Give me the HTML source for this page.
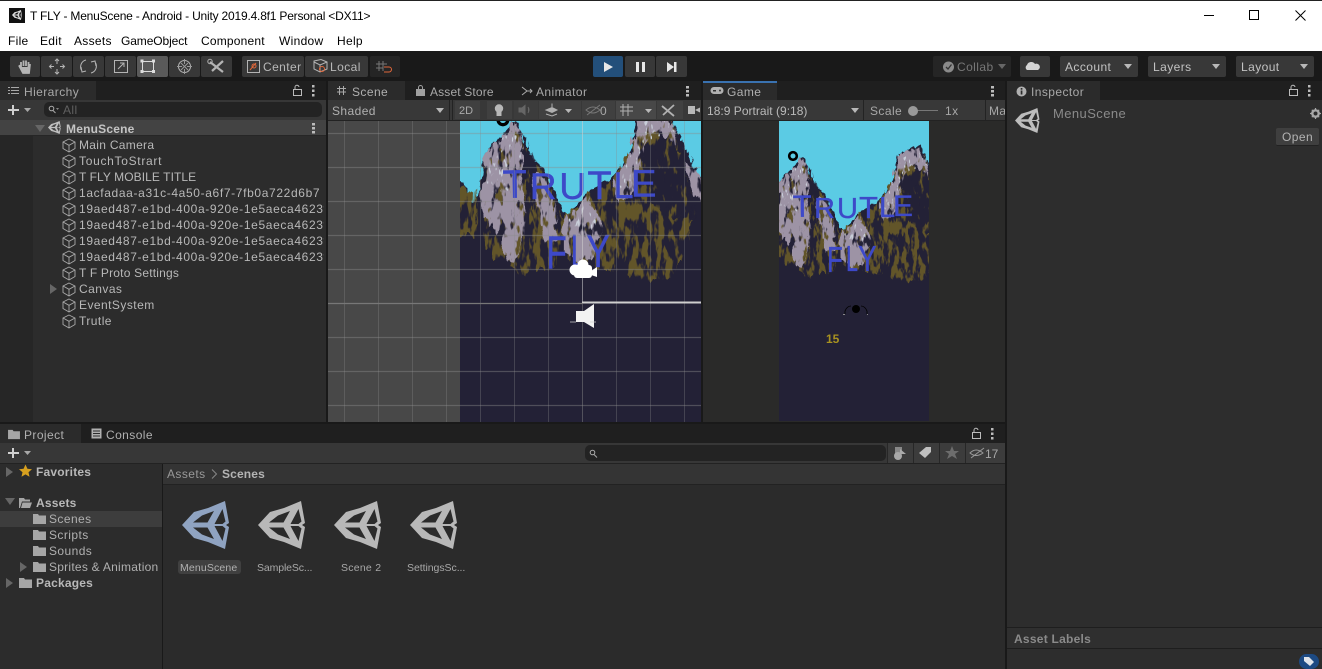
<!DOCTYPE html>
<html><head><meta charset="utf-8"><title>Unity</title>
<style>
html,body{margin:0;padding:0;width:1322px;height:669px;overflow:hidden;background:#191919}
body{position:relative;font:12px "Liberation Sans",sans-serif;color:#b4b4b4}
.a{position:absolute}
.t{position:absolute;white-space:nowrap;line-height:16px;letter-spacing:.42px}
.m{position:absolute;color:#000;top:33px;line-height:16px;font-size:12px;letter-spacing:.3px;white-space:nowrap}
.b{position:absolute;background:#383838;border-radius:2px;top:56px;height:21px}
.h{position:absolute;left:79px;white-space:nowrap;line-height:16px;letter-spacing:.45px;color:#b8b8b8;width:245px;overflow:hidden}
.g{letter-spacing:.64px}
.c{position:absolute;left:62px;width:14px;height:16px}
.k{position:absolute;width:0;height:0;border-left:4px solid transparent;border-right:4px solid transparent;border-top:5px solid #b8b8b8}
.r{position:absolute;width:0;height:0;border-top:5px solid transparent;border-bottom:5px solid transparent;border-left:7px solid #666}
.d{position:absolute;width:0;height:0;border-left:5px solid transparent;border-right:5px solid transparent;border-top:7px solid #666}
svg{position:absolute;overflow:hidden}
</style></head><body>
<svg width="0" height="0" style="left:0;top:0"><defs>
<symbol id="cube" viewBox="0 0 14 16"><path d="M7 2 L13 5 V11.500 L7 15 L1 11.500 V5 Z M1 5 L7 8.300 L13 5 M7 8.300 V15" fill="none" stroke="#a8a8a8" stroke-width=".9"/></symbol>
<symbol id="unity" viewBox="0 0 48 48"><path fill-rule="evenodd" d="M0 24 L12 11 L26 7 L43 0 L47 22 L44 24 L47 26 L43 48 L26 41 L12 37 Z M11 21.500 L25.500 21.500 L32 10 L20 14.500 Z M32.500 23 L40.500 23 L43.500 20.500 L40.500 8 Z M32.500 25 L40.500 25 L43.500 27.500 L40.500 40 Z M11 26.500 L25.500 26.500 L32 38 L20 33.500 Z"/></symbol>
<symbol id="folder" viewBox="0 0 13 12"><path d="M0 1 H5 L6 2.500 H13 V11 H0 Z" fill="#a6a6a6"/></symbol>
<filter id="rough" x="-30" y="-50" width="220" height="360" filterUnits="userSpaceOnUse" color-interpolation-filters="sRGB">
<feTurbulence type="fractalNoise" baseFrequency="0.3 0.16" numOctaves="2" seed="5" result="n"/>
<feDisplacementMap in="SourceGraphic" in2="n" scale="6" xChannelSelector="R" yChannelSelector="G"/>
</filter>
<filter id="mOlive" x="-30" y="-50" width="220" height="360" filterUnits="userSpaceOnUse" color-interpolation-filters="sRGB">
<feTurbulence type="fractalNoise" baseFrequency="0.2 0.07" numOctaves="3" seed="3" result="n"/>
<feDisplacementMap in="SourceGraphic" in2="n" scale="12" xChannelSelector="R" yChannelSelector="G" result="d"/>
<feColorMatrix in="n" type="matrix" values="0 0 0 0 0 0 0 0 0 0 0 0 0 0 0 9 0 0 0 -4.100" result="m"/>
<feComposite in="d" in2="m" operator="in"/>
</filter>
<filter id="mGrey" x="-30" y="-50" width="220" height="360" filterUnits="userSpaceOnUse" color-interpolation-filters="sRGB">
<feTurbulence type="fractalNoise" baseFrequency="0.2 0.07" numOctaves="3" seed="11" result="n"/>
<feDisplacementMap in="SourceGraphic" in2="n" scale="10" xChannelSelector="R" yChannelSelector="G" result="d"/>
<feColorMatrix in="n" type="matrix" values="0 0 0 0 0 0 0 0 0 0 0 0 0 0 0 9 0 0 0 -3 " result="m"/>
<feComposite in="d" in2="m" operator="in"/>
</filter>
<filter id="mLight" x="-30" y="-50" width="220" height="360" filterUnits="userSpaceOnUse" color-interpolation-filters="sRGB">
<feTurbulence type="fractalNoise" baseFrequency="0.4 0.15" numOctaves="2" seed="21" result="n"/>
<feColorMatrix in="n" type="matrix" values="0 0 0 0 0 0 0 0 0 0 0 0 0 0 0 10 0 0 0 -6.300" result="m"/>
<feComposite in="SourceGraphic" in2="m" operator="in"/>
</filter>
<g id="art">
<rect x="-30" y="-50" width="220" height="360" fill="#5bcbe4"/>
<polygon filter="url(#rough)" fill="#232136" points="-40,84 -15,84 -12,100 -6,97 -4,87 0,62 6,54 13,48 18,42 21,37 25,36 28,44 29,51 38,66 46,72 56,96 63,111 71,102 81,91 101,79 108,68 114,59 119,33 127,30 134,27 141,24 150,44 160,64 168,80 195,78 195,330 -40,330"/>
<g fill="#625529" filter="url(#mOlive)">
<polygon points="-20,86 -6,90 -4,125 -20,126"/>
<polygon points="0,70 26,44 38,68 46,74 56,98 63,113 60,130 56,150 44,152 30,156 16,150 2,136 -4,118"/>
<polygon points="60,112 72,104 82,94 100,82 116,138 108,152 88,152 70,150 62,140"/>
<polygon points="100,82 114,62 122,40 146,34 152,60 160,82 164,110 158,136 146,158 130,162 112,156 106,130"/>
</g>
<g fill="#232136" filter="url(#mGrey)">
<polygon points="124,56 142,46 162,80 164,112 146,112 130,100 126,78"/>
<polygon points="2,96 20,92 24,114 8,116"/>
<polygon points="30,48 40,70 44,92 36,104 30,80"/>
</g>
<g fill="#9d93a5" filter="url(#mGrey)">
<polygon points="-2,96 0,64 6,56 13,50 18,44 21,39 25,38 28,48 31,66 28,84 32,96 30,120 26,142 18,146 12,126 8,116 2,118"/>
<polygon points="38,78 46,80 54,100 58,128 50,134 44,116 40,100"/>
<polygon points="62,116 70,106 80,96 92,112 88,132 84,146 70,146 62,136"/>
<polygon points="100,84 108,72 114,62 120,36 130,32 132,44 124,56 120,76 114,94 104,100"/>
<polygon points="127,31 141,26 150,46 148,56 138,44 130,48"/>
<polygon points="156,68 168,80 172,100 162,92"/>
</g>
<g fill="#c8ced9" filter="url(#mLight)">
<polygon points="0,66 6,56 13,50 21,40 26,42 28,64 18,90 2,100"/>
<polygon points="104,84 116,58 122,38 140,28 148,44 130,50 120,76 110,98"/>
<polygon points="64,114 80,98 88,116 74,130"/>
</g>
<g fill="#3d49c8" stroke="#3d49c8" stroke-width=".3" font-family="Liberation Sans,sans-serif">
<text x="14" y="96" font-size="31" transform="rotate(-1 14 96)">T</text>
<text x="35" y="97" font-size="29">R</text>
<text x="58" y="97" font-size="29">U</text>
<text x="80" y="97" font-size="31">T</text>
<text x="100" y="96" font-size="29">L</text>
<text x="114" y="95" font-size="30">E</text>
<text transform="translate(48 151) scale(.72 1)" font-size="36">F</text>
<text transform="translate(67 150) scale(.6 1)" font-size="36">L</text>
<text transform="translate(79 150) scale(.78 1)" font-size="36">Y</text>
</g>
<circle cx="14" cy="35" r="3.800" fill="none" stroke="#000" stroke-width="2.600"/>
</g>
</defs></svg>

<!-- title bar -->
<div class="a" style="left:0;top:0;width:1322px;height:51px;background:#fff;border-top:1px solid #222;box-sizing:border-box"></div>
<div class="a" style="left:9px;top:8px;width:16px;height:15px;background:#111"></div>
<svg style="left:12px;top:10px;fill:#ddd" width="10" height="10"><use href="#unity" width="10" height="10"/></svg>
<div class="t" style="left:30px;top:8px;color:#000;letter-spacing:-.2px">T FLY - MenuScene - Android - Unity 2019.4.8f1 Personal &lt;DX11&gt;</div>
<div class="a" style="left:1204px;top:15px;width:10px;height:1px;background:#000"></div>
<div class="a" style="left:1249px;top:10px;width:8px;height:8px;border:1px solid #000"></div>
<svg style="left:1295px;top:10px" width="11" height="11"><path d="M.5 .5 L10.500 10.500 M10.500 .5 L.5 10.500" stroke="#000" stroke-width="1"/></svg>
<div class="m" style="left:8px">File</div><div class="m" style="left:40px">Edit</div><div class="m" style="left:74px">Assets</div><div class="m" style="left:121px;letter-spacing:-.1px">GameObject</div><div class="m" style="left:201px;letter-spacing:.2px">Component</div><div class="m" style="left:279px">Window</div><div class="m" style="left:337px">Help</div>

<!-- toolbar -->
<div class="b" style="left:10px;width:30px"></div><div class="b" style="left:41px;width:31px"></div><div class="b" style="left:73px;width:31px"></div><div class="b" style="left:105px;width:31px"></div><div class="b" style="left:137px;width:31px;background:#5a5a5a"></div><div class="b" style="left:169px;width:31px"></div><div class="b" style="left:201px;width:31px"></div>
<svg style="left:10px;top:56px" width="222" height="21" fill="none" stroke="#b4b4b4" stroke-width="1">
<path d="M11 11 V6 M13.500 10 V4.500 M16 10 V4.500 M18.500 11 V6 M11 11 L9 9.500 L13 17 H19 L20 8" stroke-width="1.800"/><path d="M10 11 H20 V14 L18 17 H13Z" fill="#b4b4b4" stroke="none"/>
<path d="M47 3 V8 M47 13 V18 M39.500 10.500 H44 M50 10.500 H54.500 M45 5 L47 3 L49 5 M45 16 L47 18 L49 16 M41.500 8.500 L39.500 10.500 L41.500 12.500 M52.500 8.500 L54.500 10.500 L52.500 12.500"/>
<path d="M76 4 A7 7 0 0 0 72 15 M71 11 L72 16 L76 15 M81 17 A7 7 0 0 0 85 6 M86 10 L85 5 L81 6"/>
<rect x="104.500" y="4.500" width="13" height="12"/><path d="M108 13 L114 7 M110 7 H114 V11"/>
<rect x="132.500" y="5.500" width="11" height="10" stroke="#ddd"/><g fill="#ddd" stroke="none"><rect x="130.500" y="3.500" width="3" height="3"/><rect x="142" y="3.500" width="3" height="3"/><rect x="130.500" y="14" width="3" height="3"/><rect x="142" y="14" width="3" height="3"/></g>
<circle cx="174.500" cy="10.500" r="6"/><path d="M167 10.500 H172 M177 10.500 H182 M174.500 3 V8 M174.500 13 V18 M171 7 L178 14 M178 7 L171 14" stroke="#999"/>
<path d="M200 6 L213 16 M213 5 L202 15" stroke-width="2.200"/><circle cx="200" cy="5.500" r="2.200"/></svg>
<div class="b" style="left:242px;width:62px"></div><div class="b" style="left:305px;width:63px"></div><div class="b" style="left:370px;width:30px;background:#252525"></div>
<svg style="left:247px;top:59px" width="150" height="16" fill="none" stroke="#b4b4b4">
<rect x=".5" y="1.500" width="12" height="12"/><path d="M3 11 L9 4" stroke="#e0673a"/><circle cx="7" cy="7" r="2" stroke="#e0673a"/>
<path d="M67 2 L74 0.500 L80 3 V10 L73 13 L67 10Z M67 3 L73 6 L80 3 M73 6 V13"/><circle cx="75" cy="10" r="2.500" stroke="#e0673a"/>
<path d="M132 2 V12 M136 2 V12 M129 5 H140 M129 9 H136" stroke="#777"/><path d="M137 8 H142 A2.500 2.500 0 0 1 142 13 H137" stroke="#e0673a"/></svg>
<div class="t" style="left:263px;top:59px;color:#b8b8b8">Center</div><div class="t" style="left:330px;top:59px;color:#b8b8b8">Local</div>
<div class="b" style="left:593px;width:30px;background:#234f7a"></div><div class="b" style="left:625px;width:30px"></div><div class="b" style="left:656px;width:31px"></div>
<svg style="left:593px;top:56px" width="94" height="21" fill="#e8e8e8"><path d="M11 6 L20 11 L11 16Z"/><rect x="43" y="6" width="3" height="10"/><rect x="49" y="6" width="3" height="10"/><path d="M74 6 L81 11 L74 16Z"/><rect x="81" y="6" width="2.500" height="10"/></svg>
<div class="b" style="left:933px;width:78px;background:#252525"></div><div class="b" style="left:1020px;width:30px"></div>
<div class="b" style="left:1060px;width:78px"></div><div class="b" style="left:1148px;width:78px"></div><div class="b" style="left:1236px;width:78px"></div>
<svg style="left:942px;top:59px" width="100" height="16"><circle cx="6.500" cy="8" r="5.500" fill="#8a8a8a"/><path d="M4 8 L6 10 L9.500 5.500" stroke="#333" stroke-width="1.300" fill="none"/><path d="M85 11 a3 3 0 0 1 0 -5 a4.500 4.500 0 0 1 8 -1 a3 3 0 0 1 3 6Z" fill="#d4d4d4"/></svg>
<div class="t" style="left:957px;top:59px;color:#777">Collab</div><div class="k" style="left:998px;top:64px;border-top-color:#666"></div>
<div class="t" style="left:1065px;top:59px;color:#c2c2c2">Account</div><div class="k" style="left:1124px;top:64px"></div>
<div class="t" style="left:1153px;top:59px;color:#c2c2c2">Layers</div><div class="k" style="left:1212px;top:64px"></div>
<div class="t" style="left:1241px;top:59px;color:#c2c2c2">Layout</div><div class="k" style="left:1300px;top:64px"></div>

<!-- Hierarchy -->
<div class="a" style="left:0;top:81px;width:326px;height:19px;background:#1f1f1f"></div>
<div class="a" style="left:0;top:81px;width:96px;height:19px;background:#2b2b2b"></div>
<div class="a" style="left:0;top:100px;width:326px;height:20px;background:#373737"></div>
<div class="a" style="left:0;top:120px;width:326px;height:303px;background:#2c2c2c"></div>
<div class="a" style="left:0;top:136px;width:33px;height:287px;background:#262626"></div>
<div class="a" style="left:0;top:120px;width:326px;height:16px;background:#434343;border-bottom:1px solid #262626;box-sizing:border-box"></div>
<svg style="left:8px;top:86px" width="12" height="10" stroke="#a8a8a8" fill="none"><path d="M3 1.500 H11 M3 4.500 H11 M3 7.500 H11 M0 1.500 H2 M0 4.500 H2 M0 7.500 H2"/></svg>
<div class="t" style="left:24px;top:84px;color:#a8a8a8">Hierarchy</div>
<svg style="left:292px;top:84px" width="28" height="14" fill="none" stroke="#bbb"><rect x="1.500" y="5.500" width="8" height="6"/><path d="M3 5 V3.500 A2 2 0 0 1 7 3 "/><g fill="#bbb" stroke="none"><rect x="20" y="1" width="2.500" height="2.500"/><rect x="20" y="5.500" width="2.500" height="2.500"/><rect x="20" y="10" width="2.500" height="2.500"/></g></svg>
<svg style="left:7px;top:103px" width="26" height="14"><path d="M6 2 V12 M1 7 H12" stroke="#d0d0d0" stroke-width="2"/><path d="M17 5 H24 L20.500 9Z" fill="#a8a8a8"/></svg>
<div class="a" style="left:44px;top:102px;width:278px;height:15px;background:#232323;border-radius:5px"></div>
<svg style="left:48px;top:105px" width="12" height="10" fill="none" stroke="#aaa"><circle cx="3.500" cy="3.500" r="2.300"/><path d="M5 5.500 L7.500 8"/><path d="M8 3 H11 L9.500 5Z" fill="#888" stroke="none"/></svg>
<div class="t" style="left:63px;top:102px;color:#606060">All</div>
<div class="d" style="left:35px;top:125px"></div>
<svg style="left:48px;top:121px;fill:#c0c0c0" width="13" height="13"><use href="#unity" width="13" height="13"/></svg>
<div class="t" style="left:66px;top:121px;color:#c4c4c4;font-weight:bold;letter-spacing:.2px">MenuScene</div>
<svg style="left:312px;top:123px" width="4" height="11" fill="#bbb"><rect x="0" y="0" width="3" height="2.500"/><rect y="4" width="3" height="2.500"/><rect y="8" width="3" height="2.500"/></svg>

<svg class="c" style="top:137px"><use href="#cube" width="14" height="16"/></svg><div class="h" style="top:137px;letter-spacing:.3px">Main Camera</div>
<svg class="c" style="top:153px"><use href="#cube" width="14" height="16"/></svg><div class="h" style="top:153px;letter-spacing:.7px">TouchToStrart</div>
<svg class="c" style="top:169px"><use href="#cube" width="14" height="16"/></svg><div class="h" style="top:169px;letter-spacing:.08px">T FLY MOBILE TITLE</div>
<svg class="c" style="top:185px"><use href="#cube" width="14" height="16"/></svg><div class="h g" style="top:185px">1acfadaa-a31c-4a50-a6f7-7fb0a722d6b7</div>
<svg class="c" style="top:201px"><use href="#cube" width="14" height="16"/></svg><div class="h g" style="top:201px">19aed487-e1bd-400a-920e-1e5aeca4623f</div>
<svg class="c" style="top:217px"><use href="#cube" width="14" height="16"/></svg><div class="h g" style="top:217px">19aed487-e1bd-400a-920e-1e5aeca4623f</div>
<svg class="c" style="top:233px"><use href="#cube" width="14" height="16"/></svg><div class="h g" style="top:233px">19aed487-e1bd-400a-920e-1e5aeca4623f</div>
<svg class="c" style="top:249px"><use href="#cube" width="14" height="16"/></svg><div class="h g" style="top:249px">19aed487-e1bd-400a-920e-1e5aeca4623f</div>
<svg class="c" style="top:265px"><use href="#cube" width="14" height="16"/></svg><div class="h" style="top:265px;letter-spacing:.2px">T F Proto Settings</div>
<div class="r" style="left:50px;top:284px"></div>
<svg class="c" style="top:281px"><use href="#cube" width="14" height="16"/></svg><div class="h" style="top:281px">Canvas</div>
<svg class="c" style="top:297px"><use href="#cube" width="14" height="16"/></svg><div class="h" style="top:297px">EventSystem</div>
<svg class="c" style="top:313px"><use href="#cube" width="14" height="16"/></svg><div class="h" style="top:313px">Trutle</div>

<!-- Scene panel -->
<div class="a" style="left:328px;top:81px;width:373px;height:19px;background:#1f1f1f"></div>
<div class="a" style="left:328px;top:81px;width:77px;height:19px;background:#2b2b2b"></div>
<svg style="left:336px;top:85px" width="12" height="12" stroke="#aaa" fill="none"><path d="M3.500 1 V10 M7.500 1 V10 M1 3.500 H10 M1 7 H10"/></svg>
<div class="t" style="left:352px;top:84px;color:#b0b0b0">Scene</div>
<svg style="left:415px;top:85px" width="11" height="12" fill="#a0a0a0"><path d="M1 4 H10 V11 H1Z"/><path d="M3.500 4 V2.500 A2 2 0 0 1 7.500 2.500 V4" fill="none" stroke="#a0a0a0"/></svg>
<div class="t" style="left:430px;top:84px;color:#a8a8a8;letter-spacing:.15px">Asset Store</div>
<svg style="left:521px;top:85px" width="12" height="12" fill="none" stroke="#aaa"><path d="M1 2 L6 6 L1 10 M6 6 H11 M9 4 L11 6 L9 8"/></svg>
<div class="t" style="left:536px;top:84px;color:#a8a8a8">Animator</div>
<svg style="left:686px;top:86px" width="4" height="11" fill="#bbb"><rect width="3" height="2.500"/><rect y="4" width="3" height="2.500"/><rect y="8" width="3" height="2.500"/></svg>
<div class="a" style="left:328px;top:100px;width:373px;height:21px;background:#383838;border-bottom:1px solid #222;box-sizing:border-box"></div>
<div class="t" style="left:332px;top:103px;color:#b0b0b0">Shaded</div><div class="k" style="left:436px;top:108px"></div>
<div class="a" style="left:449px;top:100px;width:1px;height:20px;background:#232323"></div>
<div class="a" style="left:452px;top:100px;width:1px;height:20px;background:#232323"></div>
<div class="a" style="left:455px;top:101px;width:25px;height:18px;background:#404040"></div>
<div class="t" style="left:459px;top:103px;color:#aaa;font-size:11px;letter-spacing:0">2D</div>
<div class="a" style="left:487px;top:101px;width:25px;height:18px;background:#404040"></div>
<div class="a" style="left:514px;top:101px;width:24px;height:18px;background:#3c3c3c"></div>
<div class="a" style="left:539px;top:101px;width:42px;height:18px;background:#404040"></div>
<div class="a" style="left:582px;top:101px;width:33px;height:18px;background:#404040"></div>
<div class="a" style="left:616px;top:101px;width:40px;height:18px;background:#484848"></div>
<div class="a" style="left:657px;top:101px;width:26px;height:18px;background:#404040"></div>
<svg style="left:490px;top:102px" width="210" height="17" fill="none" stroke="#b0b0b0">
<circle cx="9" cy="6.500" r="4.200" fill="#b8b8b8" stroke="none"/><rect x="6.500" y="10" width="5" height="4" fill="#b8b8b8" stroke="none"/>
<path d="M29 6 H32 L35 3.500 V12.500 L32 10 H29Z M38 5 Q40 8 38 11" stroke="#666" fill="#666"/>
<path d="M56 12 L62 14 L67 12" /><path d="M56 8 L62 10.500 L67 8 L62 5.500Z M62 1.500 V5" fill="#b0b0b0"/><path d="M75 7 H82 L78.500 11Z" fill="#b8b8b8" stroke="none"/>
<path d="M96 8 Q103 2 110 8 Q103 14 96 8Z M97 13 L110 3" stroke="#777"/>
<path d="M133 2 V14 M138 2 V14 M130 5 H143 M130 9 H143" />
<path d="M155 7 H162 L158.500 11Z" fill="#b8b8b8" stroke="none"/>
<path d="M172 4 L184 14 M184 3 L173 13" stroke-width="1.800"/>
<rect x="198" y="4" width="7" height="8" fill="#b8b8b8" stroke="none"/><path d="M205 8 L211 5 V11Z" fill="#b8b8b8" stroke="none"/></svg>
<div class="t" style="left:600px;top:103px;color:#a8a8a8">0</div>
<div class="a" style="left:328px;top:121px;width:132px;height:301px;background:#484848"></div>
<svg style="left:460px;top:121px" width="241" height="301"><use href="#art" transform="translate(25 -46) scale(1.28)"/></svg>
<svg style="left:328px;top:121px" width="373" height="301">
<g stroke="#8c8c8c" stroke-opacity=".32" stroke-width="1">
<path d="M16.500 0 V301 M50.500 0 V301 M84.500 0 V301 M118.500 0 V301 M152.500 0 V301 M186.500 0 V301 M220.500 0 V301 M288.500 0 V301 M322.500 0 V301 M356.500 0 V301"/>
<path d="M0 12.500 H373 M0 46.500 H373 M0 80.500 H373 M0 114.500 H373 M0 148.500 H373 M0 216.500 H373 M0 250.500 H373 M0 284.500 H373" stroke-width="1.200" stroke-opacity=".42"/>
</g>
<path d="M254.500 0 V182" stroke="#cfcfcf" stroke-opacity=".55"/><path d="M0 182.500 H254" stroke="#777" stroke-width="1.200"/><path d="M254 181.500 H373" stroke="#cfcfcf" stroke-width="2"/><path d="M254.500 182 V301" stroke="#8c8c8c" stroke-opacity=".45"/>
<circle cx="255" cy="144" r="5.500" fill="#fff"/><circle cx="247" cy="149" r="5.500" fill="#fff"/><rect x="246" y="144" width="18" height="13" rx="3" fill="#fff"/><path d="M263 150 L269 146 V156 L263 154Z" fill="#fff"/>
<path d="M248 190 H256 L266 183 V207 L256 201 H248Z" fill="#f2f2f2"/>
<path d="M242 201 H248 M262 201 H268" stroke="#ccc" stroke-width=".7"/>
</svg>
<div class="a" style="left:326px;top:81px;width:2px;height:342px;background:#191919"></div>
<div class="a" style="left:701px;top:81px;width:2px;height:342px;background:#191919"></div>

<!-- Game panel -->
<div class="a" style="left:703px;top:81px;width:302px;height:19px;background:#1f1f1f"></div>
<div class="a" style="left:703px;top:81px;width:74px;height:19px;background:#2b2b2b;border-top:2px solid #3a72b0;box-sizing:border-box"></div>
<svg style="left:710px;top:86px" width="14" height="10"><rect x=".5" y="1" width="13" height="7" rx="3.500" fill="#b0b0b0"/><rect x="3" y="4" width="3" height="1.500" fill="#333"/><circle cx="10" cy="4.500" r="1" fill="#333"/></svg>
<div class="t" style="left:727px;top:84px;color:#b0b0b0">Game</div>
<svg style="left:991px;top:86px" width="4" height="11" fill="#bbb"><rect width="3" height="2.500"/><rect y="4" width="3" height="2.500"/><rect y="8" width="3" height="2.500"/></svg>
<div class="a" style="left:703px;top:100px;width:302px;height:21px;background:#383838;border-bottom:1px solid #222;box-sizing:border-box"></div>
<div class="t" style="left:707px;top:103px;color:#bababa;letter-spacing:.02px">18:9 Portrait (9:18)</div><div class="k" style="left:851px;top:108px"></div>
<div class="a" style="left:863px;top:100px;width:1px;height:20px;background:#232323"></div>
<div class="t" style="left:870px;top:103px;color:#a8a8a8">Scale</div>
<div class="a" style="left:913px;top:110px;width:25px;height:1px;background:#777"></div>
<div class="a" style="left:908px;top:106px;width:10px;height:10px;border-radius:50%;background:#999"></div>
<div class="t" style="left:945px;top:103px;color:#a8a8a8">1x</div>
<div class="a" style="left:985px;top:100px;width:1px;height:20px;background:#232323"></div>
<div class="t" style="left:989px;top:103px;color:#a8a8a8">Ma</div>
<div class="a" style="left:703px;top:121px;width:302px;height:301px;background:#2a2a29"></div>
<svg style="left:779px;top:121px" width="150" height="300"><use href="#art"/>
<circle cx="77" cy="188" r="4" fill="#000"/>
<path d="M66 193 V190 Q68 185 72 185 M88 193 V190 Q86 185 82 185" fill="none" stroke="#000" stroke-width=".8"/>
<rect x="64" y="193" width="2" height="1" fill="#888"/><rect x="88" y="193" width="1" height="1" fill="#888"/>
<text x="47" y="222" font-family="Liberation Sans,sans-serif" font-size="12" font-weight="bold" fill="#a89220">15</text></svg>
<div class="a" style="left:1005px;top:81px;width:2px;height:588px;background:#191919"></div>

<!-- Inspector -->
<div class="a" style="left:1007px;top:81px;width:315px;height:19px;background:#1f1f1f"></div>
<div class="a" style="left:1007px;top:81px;width:93px;height:19px;background:#2b2b2b"></div>
<div class="a" style="left:1007px;top:100px;width:315px;height:569px;background:#2d2d2d"></div>
<svg style="left:1016px;top:86px" width="11" height="11"><circle cx="5.500" cy="5.500" r="5" fill="#b0b0b0"/><rect x="4.700" y="4.500" width="1.700" height="4" fill="#2b2b2b"/><rect x="4.700" y="2" width="1.700" height="1.700" fill="#2b2b2b"/></svg>
<div class="t" style="left:1031px;top:84px;color:#a8a8a8">Inspector</div>
<svg style="left:1288px;top:84px" width="28" height="14" fill="none" stroke="#bbb"><rect x="1.500" y="5.500" width="8" height="6"/><path d="M3 5 V3.500 A2 2 0 0 1 7 3"/><g fill="#bbb" stroke="none"><rect x="20" y="1" width="2.500" height="2.500"/><rect x="20" y="5.500" width="2.500" height="2.500"/><rect x="20" y="10" width="2.500" height="2.500"/></g></svg>
<svg style="left:1015px;top:108px;fill:#bdbdbd" width="25" height="25"><use href="#unity" width="25" height="25"/></svg>
<div class="t" style="left:1053px;top:106px;color:#8a8a8a;font-size:13px">MenuScene</div>
<svg style="left:1310px;top:108px" width="11" height="11"><circle cx="5.500" cy="5.500" r="3.200" fill="none" stroke="#a8a8a8" stroke-width="2.400"/><path d="M5.500 0 V11 M0 5.500 H11 M1.800 1.800 L9.200 9.200 M9.200 1.800 L1.800 9.200" stroke="#a8a8a8" stroke-width="1.200" stroke-dasharray="2 7"/></svg>
<div class="a" style="left:1276px;top:128px;width:43px;height:18px;background:#3f3f3f;border-radius:2px;border-bottom:1px solid #222;box-sizing:border-box"></div>
<div class="t" style="left:1282px;top:129px;color:#b4b4b4">Open</div>
<div class="a" style="left:1007px;top:627px;width:315px;height:22px;background:#2f2f2f;border-top:1px solid #1e1e1e;border-bottom:1px solid #1e1e1e;box-sizing:border-box"></div>
<div class="t" style="left:1014px;top:631px;color:#8a8a8a;font-weight:bold;letter-spacing:.25px">Asset Labels</div>
<div class="a" style="left:1299px;top:654px;width:20px;height:15px;border-radius:10px;background:#1d4a83"></div>
<svg style="left:1303px;top:656px" width="12" height="11"><path d="M1 1 H6 L11 6 L7 10 L1 5Z" fill="#e0e4ea"/></svg>

<!-- Project panel -->
<div class="a" style="left:0;top:422px;width:1005px;height:2px;background:#191919"></div>
<div class="a" style="left:0;top:424px;width:1005px;height:19px;background:#1f1f1f"></div>
<div class="a" style="left:0;top:424px;width:81px;height:19px;background:#2b2b2b"></div>
<svg style="left:8px;top:429px;" width="12" height="11"><use href="#folder" width="12" height="11"/></svg>
<div class="t" style="left:24px;top:427px;color:#b0b0b0">Project</div>
<svg style="left:91px;top:428px" width="11" height="11"><rect x=".5" y=".5" width="10" height="10" fill="#b0b0b0"/><path d="M2 3 H9 M2 5.500 H9 M2 8 H9" stroke="#2b2b2b"/></svg>
<div class="t" style="left:106px;top:427px;color:#b0b0b0">Console</div>
<svg style="left:971px;top:427px" width="28" height="14" fill="none" stroke="#bbb"><rect x="1.500" y="5.500" width="8" height="6"/><path d="M3 5 V3.500 A2 2 0 0 1 7 3"/><g fill="#bbb" stroke="none"><rect x="20" y="1" width="2.500" height="2.500"/><rect x="20" y="5.500" width="2.500" height="2.500"/><rect x="20" y="10" width="2.500" height="2.500"/></g></svg>
<div class="a" style="left:0;top:443px;width:1005px;height:21px;background:#373737;border-bottom:1px solid #222;box-sizing:border-box"></div>
<svg style="left:7px;top:446px" width="26" height="14"><path d="M6 2 V12 M1 7 H12" stroke="#d0d0d0" stroke-width="2"/><path d="M17 5 H24 L20.500 9Z" fill="#a8a8a8"/></svg>
<div class="a" style="left:585px;top:445px;width:301px;height:16px;background:#232323;border-radius:5px"></div>
<svg style="left:589px;top:449px" width="10" height="10" fill="none" stroke="#aaa"><circle cx="3.500" cy="3.500" r="2.300"/><path d="M5 5.500 L8 8.500"/></svg>
<div class="a" style="left:887px;top:443px;width:118px;height:20px;background:#3c3c3c"></div>
<div class="a" style="left:887px;top:443px;width:1px;height:20px;background:#272727"></div>
<div class="a" style="left:913px;top:443px;width:1px;height:20px;background:#272727"></div>
<div class="a" style="left:939px;top:443px;width:1px;height:20px;background:#272727"></div>
<div class="a" style="left:965px;top:443px;width:1px;height:20px;background:#272727"></div>
<svg style="left:888px;top:444px" width="116" height="18"><rect x="7" y="3" width="7" height="7" fill="#888"/><path d="M12 5 L18 10 H12Z" fill="#aaa"/><circle cx="10" cy="12" r="4" fill="#a8a8a8"/><path d="M31 9 L38 3 H43 V8 L37 14Z" fill="#c0c0c0"/><path d="M64 2 L66 7 H71 L67 10 L69 15 L64 12 L59 15 L61 10 L57 7 H62Z" fill="#6d6d6d"/><path d="M82 9 Q88 3 95 9 Q88 14 82 9Z M83 14 L96 4" stroke="#999" fill="none"/></svg>
<div class="t" style="left:985px;top:446px;color:#a8a8a8;letter-spacing:0">17</div>

<div class="a" style="left:0;top:464px;width:162px;height:205px;background:#2c2c2c"></div>
<div class="a" style="left:162px;top:464px;width:1px;height:205px;background:#191919"></div>
<div class="a" style="left:163px;top:464px;width:842px;height:21px;background:#343434;border-bottom:1px solid #222;box-sizing:border-box"></div>
<div class="a" style="left:163px;top:485px;width:842px;height:184px;background:#2b2b2b"></div>
<div class="a" style="left:0;top:511px;width:162px;height:16px;background:#3d3d3d"></div>
<div class="r" style="left:6px;top:467px"></div>
<svg style="left:19px;top:464px" width="13" height="13"><path d="M6.500 .5 L8.400 4.700 L13 5.200 L9.500 8.200 L10.500 12.800 L6.500 10.400 L2.500 12.800 L3.500 8.200 L0 5.200 L4.600 4.700Z" fill="#d7a01f"/></svg>
<div class="t" style="left:36px;top:464px;color:#b8b8b8;font-weight:bold;letter-spacing:.2px">Favorites</div>
<div class="d" style="left:5px;top:498px"></div>
<svg style="left:19px;top:497px" width="13" height="12"><path d="M0 1 H5 L6 2.500 H11 V4.500 H3 L1 11 H0Z" fill="#a6a6a6"/><path d="M3.500 5.500 H13 L11 11 H2Z" fill="#a6a6a6"/></svg>
<div class="t" style="left:36px;top:495px;color:#b8b8b8;font-weight:bold;letter-spacing:.2px">Assets</div>
<svg style="left:33px;top:513px" width="13" height="12"><use href="#folder" width="13" height="12"/></svg>
<div class="t" style="left:49px;top:511px;color:#b0b0b0">Scenes</div>
<svg style="left:33px;top:529px" width="13" height="12"><use href="#folder" width="13" height="12"/></svg>
<div class="t" style="left:49px;top:527px;color:#b0b0b0">Scripts</div>
<svg style="left:33px;top:545px" width="13" height="12"><use href="#folder" width="13" height="12"/></svg>
<div class="t" style="left:49px;top:543px;color:#b0b0b0">Sounds</div>
<div class="r" style="left:20px;top:562px"></div>
<svg style="left:33px;top:561px" width="13" height="12"><use href="#folder" width="13" height="12"/></svg>
<div class="t" style="left:49px;top:559px;color:#b0b0b0;letter-spacing:.25px">Sprites &amp; Animation</div>
<div class="r" style="left:6px;top:578px"></div>
<svg style="left:19px;top:577px" width="13" height="12"><use href="#folder" width="13" height="12"/></svg>
<div class="t" style="left:36px;top:575px;color:#b8b8b8;font-weight:bold;letter-spacing:.2px">Packages</div>
<div class="t" style="left:167px;top:466px;color:#999">Assets</div>
<svg style="left:211px;top:469px" width="7" height="10"><path d="M1 .5 L5.500 5 L1 9.500" fill="none" stroke="#888"/></svg>
<div class="t" style="left:222px;top:466px;color:#b4b4b4;font-weight:bold;letter-spacing:.15px">Scenes</div>
<svg style="left:182px;top:501px;fill:#8fa3c1" width="48" height="48"><use href="#unity" width="48" height="48"/></svg>
<svg style="left:258px;top:501px;fill:#b8b8b8" width="48" height="48"><use href="#unity" width="48" height="48"/></svg>
<svg style="left:334px;top:501px;fill:#b8b8b8" width="48" height="48"><use href="#unity" width="48" height="48"/></svg>
<svg style="left:410px;top:501px;fill:#b8b8b8" width="48" height="48"><use href="#unity" width="48" height="48"/></svg>
<div class="a" style="left:178px;top:560px;width:63px;height:14px;background:#404040;border-radius:3px"></div>
<div class="t" style="left:180px;top:560px;color:#b0b0b0;font-size:10.500px;letter-spacing:.15px">MenuScene</div>
<div class="t" style="left:257px;top:560px;color:#a8a8a8;font-size:10.500px;letter-spacing:-.12px">SampleSc...</div>
<div class="t" style="left:341px;top:560px;color:#a8a8a8;font-size:10.500px;letter-spacing:.25px">Scene 2</div>
<div class="t" style="left:407px;top:560px;color:#a8a8a8;font-size:10.500px;letter-spacing:-.05px">SettingsSc...</div>
</body></html>
